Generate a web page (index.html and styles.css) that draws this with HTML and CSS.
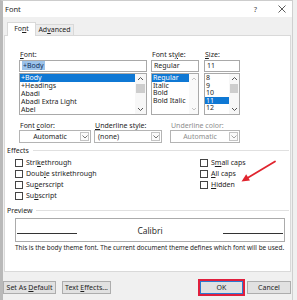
FILE: index.html
```html
<!DOCTYPE html>
<html>
<head>
<meta charset="utf-8">
<link rel="stylesheet" href="styles.css">
</head>
<body>
<div class="window">
  <div class="titlebar">
    <span class="title">Font</span>
    <span class="tb-help">?</span>
    <svg class="tb-close" width="8" height="8" viewBox="0 0 8 8"><path d="M0.5 0.5 L7.5 7.5 M7.5 0.5 L0.5 7.5" stroke="#333" stroke-width="0.8" fill="none"/></svg>
  </div>
  <div class="tabs">
    <div class="tab active">Fo<u>n</u>t</div>
    <div class="tab">Ad<u>v</u>anced</div>
  </div>
  <div class="panel">
    <div class="lists-row">
      <div class="col col-font">
        <div class="lbl"><u>F</u>ont:</div>
        <div class="input"><span class="sel-text">+Body</span></div>
        <div class="listbox lb-font">
          <div class="items">
            <div class="item selected">+Body</div>
            <div class="item">+Headings</div>
            <div class="item">Abadi</div>
            <div class="item">Abadi Extra Light</div>
            <div class="item">Abel</div>
          </div>
          <div class="sbar">
            <svg class="arr" width="7" height="5" viewBox="0 0 7 5"><polyline points="1,4 3.5,1.5 6,4" stroke="#555" stroke-width="1" fill="none"/></svg>
            <div class="thumb"></div>
            <svg class="arr arr-dn" width="7" height="5" viewBox="0 0 7 5"><polyline points="1,1 3.5,3.5 6,1" stroke="#555" stroke-width="1" fill="none"/></svg>
          </div>
        </div>
      </div>
      <div class="col col-style">
        <div class="lbl">Font st<u>y</u>le:</div>
        <div class="input">Regular</div>
        <div class="listbox lb-small">
          <div class="items">
            <div class="item selected">Regular</div>
            <div class="item">Italic</div>
            <div class="item">Bold</div>
            <div class="item">Bold Italic</div>
          </div>
          <div class="sbar sbar-dis">
            <svg class="arr" width="6" height="5" viewBox="0 0 6 5"><polyline points="1,4 3,2 5,4" stroke="#c4c4c4" stroke-width="1" fill="none"/></svg>
            <svg class="arr arr-dn" width="6" height="5" viewBox="0 0 6 5"><polyline points="1,1 3,3 5,1" stroke="#c4c4c4" stroke-width="1" fill="none"/></svg>
          </div>
        </div>
      </div>
      <div class="col col-size">
        <div class="lbl"><u>S</u>ize:</div>
        <div class="input">11</div>
        <div class="listbox lb-small">
          <div class="items">
            <div class="item">8</div>
            <div class="item">9</div>
            <div class="item">10</div>
            <div class="item selected">11</div>
            <div class="item">12</div>
          </div>
          <div class="sbar">
            <svg class="arr" width="7" height="5" viewBox="0 0 7 5"><polyline points="1,4 3.5,1.5 6,4" stroke="#555" stroke-width="1" fill="none"/></svg>
            <div class="thumb"></div>
            <svg class="arr arr-dn" width="7" height="5" viewBox="0 0 7 5"><polyline points="1,1 3.5,3.5 6,1" stroke="#555" stroke-width="1" fill="none"/></svg>
          </div>
        </div>
      </div>
    </div>

    <div class="colors-row">
      <div class="ccol c-fc">
        <div class="lbl">Font <u>c</u>olor:</div>
        <div class="dd dd-center"><span class="dd-text">Automatic</span><span class="dd-btn"><svg width="6" height="4" viewBox="0 0 6 4"><polyline points="0.5,0.5 3,3 5.5,0.5" stroke="#666" stroke-width="0.9" fill="none"/></svg></span></div>
      </div>
      <div class="ccol c-us">
        <div class="lbl"><u>U</u>nderline style:</div>
        <div class="dd"><span class="dd-text">(none)</span><span class="dd-btn"><svg width="6" height="4" viewBox="0 0 6 4"><polyline points="0.5,0.5 3,3 5.5,0.5" stroke="#666" stroke-width="0.9" fill="none"/></svg></span></div>
      </div>
      <div class="ccol c-uc disabled">
        <div class="lbl">Underline color:</div>
        <div class="dd dd-center"><span class="dd-text">Automatic</span><span class="dd-btn"><svg width="6" height="4" viewBox="0 0 6 4"><polyline points="0.5,0.5 3,3 5.5,0.5" stroke="#999" stroke-width="0.9" fill="none"/></svg></span></div>
      </div>
    </div>

    <div class="group-hdr hdr-effects"><span>Effects</span><span class="rule"></span></div>
    <div class="checks">
      <label class="chk"><span class="box"></span>Stri<u>k</u>ethrough</label>
      <label class="chk"><span class="box"></span>S<u>m</u>all caps</label>
      <label class="chk"><span class="box"></span>Doub<u>l</u>e strikethrough</label>
      <label class="chk"><span class="box"></span><u>A</u>ll caps</label>
      <label class="chk"><span class="box"></span>Su<u>p</u>erscript</label>
      <label class="chk"><span class="box"></span><u>H</u>idden</label>
      <label class="chk"><span class="box"></span>Su<u>b</u>script</label>
    </div>

    <div class="group-hdr hdr-preview"><span>Preview</span><span class="rule"></span></div>
    <div class="preview">
      <span class="pline"></span>
      <span class="ptext">Calibri</span>
      <span class="pline"></span>
    </div>
    <div class="desc">This is the body theme font. The current document theme defines which font will be used.</div>
  </div>
  <div class="buttons">
    <div class="btn b-default">Set As <u>D</u>efault</div>
    <div class="btn b-effects">Text <u>E</u>ffects...</div>
    <div class="btn b-ok">OK</div>
    <div class="btn b-cancel">Cancel</div>
  </div>
</div>
<svg class="annot" width="297" height="300" viewBox="0 0 297 300">
  <line x1="275" y1="161.5" x2="247" y2="178.2" stroke="#e0242e" stroke-width="1.8" stroke-linecap="round"/>
  <polygon points="241.5,181.5 250,180.6 246.2,174.2" fill="#e0242e"/>
</svg>
</body>
</html>
```

FILE: styles.css
```css
* { box-sizing: border-box; }
html, body { margin: 0; padding: 0; }
body {
  width: 297px;
  height: 300px;
  overflow: hidden;
  background: #f0f0f0;
  font-family: "Noto Sans", "Open Sans", sans-serif;
  font-size: 7px;
  color: #1e1e1e;
  position: relative;
}
u { text-decoration: underline; text-underline-offset: 1px; text-decoration-thickness: 0.6px; }

.window {
  width: 293px;
  height: 300px;
  border-left: 3px solid #b9b9b9;
  border-right: 1px solid #cfcfcf;
  border-top: 1px solid #cdcdcd;
  display: flex;
  flex-direction: column;
}

.titlebar {
  height: 16px;
  background: #fff;
  display: flex;
  align-items: center;
  padding-left: 2px;
  flex-shrink: 0;
}
.title { font-size: 7.5px; }
.tb-help { margin-left: auto; font-size: 7.5px; color: #444; }
.tb-close { margin-left: 21px; margin-right: 6px; }

.tabs {
  height: 18px;
  display: flex;
  align-items: flex-end;
  padding-left: 4px;
  flex-shrink: 0;
}
.tab {
  height: 11px;
  line-height: 10px;
  border: 1px solid #d9d9d9;
  border-bottom: none;
  background: #ececec;
  text-align: center;
  font-size: 7px;
}
.tab.active {
  width: 29px;
  height: 14px;
  line-height: 12px;
  background: #fff;
  margin-bottom: -1px;
  position: relative;
  z-index: 1;
}
.tab:not(.active) { width: 38px; border-left: none; }

.panel {
  margin-left: 1px;
  width: 287px;
  height: 237px;
  background: #fff;
  border: 1px solid #d9d9d9;
  flex-shrink: 0;
  display: flex;
  flex-direction: column;
}

.lists-row {
  margin-top: 14px;
  padding-left: 14px;
  display: flex;
}
.col { display: flex; flex-direction: column; }
.col-font { width: 128px; }
.col-style { width: 48px; margin-left: 4px; }
.col-size { width: 36px; margin-left: 5px; }
.lbl { height: 9px; line-height: 9px; white-space: nowrap; padding-left: 1px; }
.colors-row .lbl { height: 8px; line-height: 8px; }

.input {
  margin-top: 1px;
  height: 12px;
  line-height: 10px;
  border: 1px solid #a9a9a9;
  padding-left: 2px;
  white-space: nowrap;
}
.sel-text { background: #9cc3ea; color: #12305c; padding: 0 1px; }

.listbox {
  margin-top: 1px;
  height: 42px;
  border: 1px solid #a9a9a9;
  display: flex;
  overflow: hidden;
}
.items { flex: 1; display: flex; flex-direction: column; }
.item { height: 8px; line-height: 8px; padding-left: 1px; white-space: nowrap; }
.lb-small .item { height: 7.5px; line-height: 7.5px; }
.item.selected { background: #0f78d4; color: #fff; }

.sbar {
  width: 11px;
  display: flex;
  flex-direction: column;
  align-items: center;
  background: #f7f7f7;
}
.lb-small .sbar { width: 10px; }
.sbar-dis { width: 9px !important; background: #f9f9f9; }
.arr { margin-top: 2px; flex-shrink: 0; }
.arr-dn { margin-top: auto; margin-bottom: 2px; }
.thumb { width: 9px; height: 9px; margin-top: 3px; background: #cdcdcd; }
.lb-small .thumb { width: 8px; }

.colors-row {
  margin-top: 7px;
  padding-left: 14px;
  display: flex;
}
.ccol { display: flex; flex-direction: column; }
.c-fc { width: 72px; }
.c-us { width: 68px; margin-left: 3px; }
.c-uc { width: 70px; margin-left: 8px; }
.disabled { color: #8d8d8d; }
.dd {
  height: 13px;
  border: 1px solid #b4b4b4;
  display: flex;
  align-items: center;
  background: #fff;
}
.dd-text { flex: 1; padding-left: 3px; white-space: nowrap; }
.dd-center .dd-text { text-align: center; padding-left: 0; }
.dd-btn {
  width: 9px;
  height: 9px;
  margin-right: 1px;
  border: 1px solid #c4c4c4;
  display: flex;
  align-items: center;
  justify-content: center;
  background: #fafafa;
}

.group-hdr {
  display: flex;
  align-items: center;
  height: 9px;
  padding-left: 2px;
  padding-right: 1px;
}
.group-hdr .rule { flex: 1; height: 1px; background: #e0e0e0; margin-left: 4px; }
.hdr-effects { margin-top: 3px; }
.hdr-preview { margin-top: 5px; }

.checks {
  margin-top: 2px;
  padding-left: 10px;
  display: grid;
  grid-template-columns: 185px 1fr;
  grid-auto-rows: 11px;
}
.chk { display: flex; align-items: center; white-space: nowrap; }
.box {
  width: 8px;
  height: 8px;
  border: 1px solid #444;
  background: #fff;
  margin-right: 3px;
  flex-shrink: 0;
}

.preview {
  margin-top: 3px;
  margin-left: 10px;
  width: 270px;
  height: 24px;
  border: 1px solid #ababab;
  display: flex;
  align-items: center;
  justify-content: space-between;
  padding: 0 1px;
}
.pline { width: 60px; height: 1px; background: #333; margin-top: 6px; }
.ptext { font-family: "Open Sans", sans-serif; font-size: 8.5px; color: #222; }

.desc {
  margin-top: 1px;
  padding-left: 10px;
  height: 9px;
  line-height: 9px;
  font-size: 6.4px;
  white-space: nowrap;
}

.buttons {
  margin-top: 9px;
  height: 13px;
  display: flex;
  flex-shrink: 0;
}
.btn {
  height: 13px;
  line-height: 11px;
  background: #e1e1e1;
  border: 1px solid #adadad;
  text-align: center;
  white-space: nowrap;
}
.b-default { width: 53px; }
.b-effects { width: 49px; margin-left: 6px; }
.b-ok {
  width: 43px;
  margin-left: auto;
  border-color: #2a7ad2;
  outline: 2px solid #e01f3d;
}
.b-cancel { width: 44px; margin-left: 4px; margin-right: 1px; }

.annot { position: absolute; left: 0; top: 0; pointer-events: none; }
```
